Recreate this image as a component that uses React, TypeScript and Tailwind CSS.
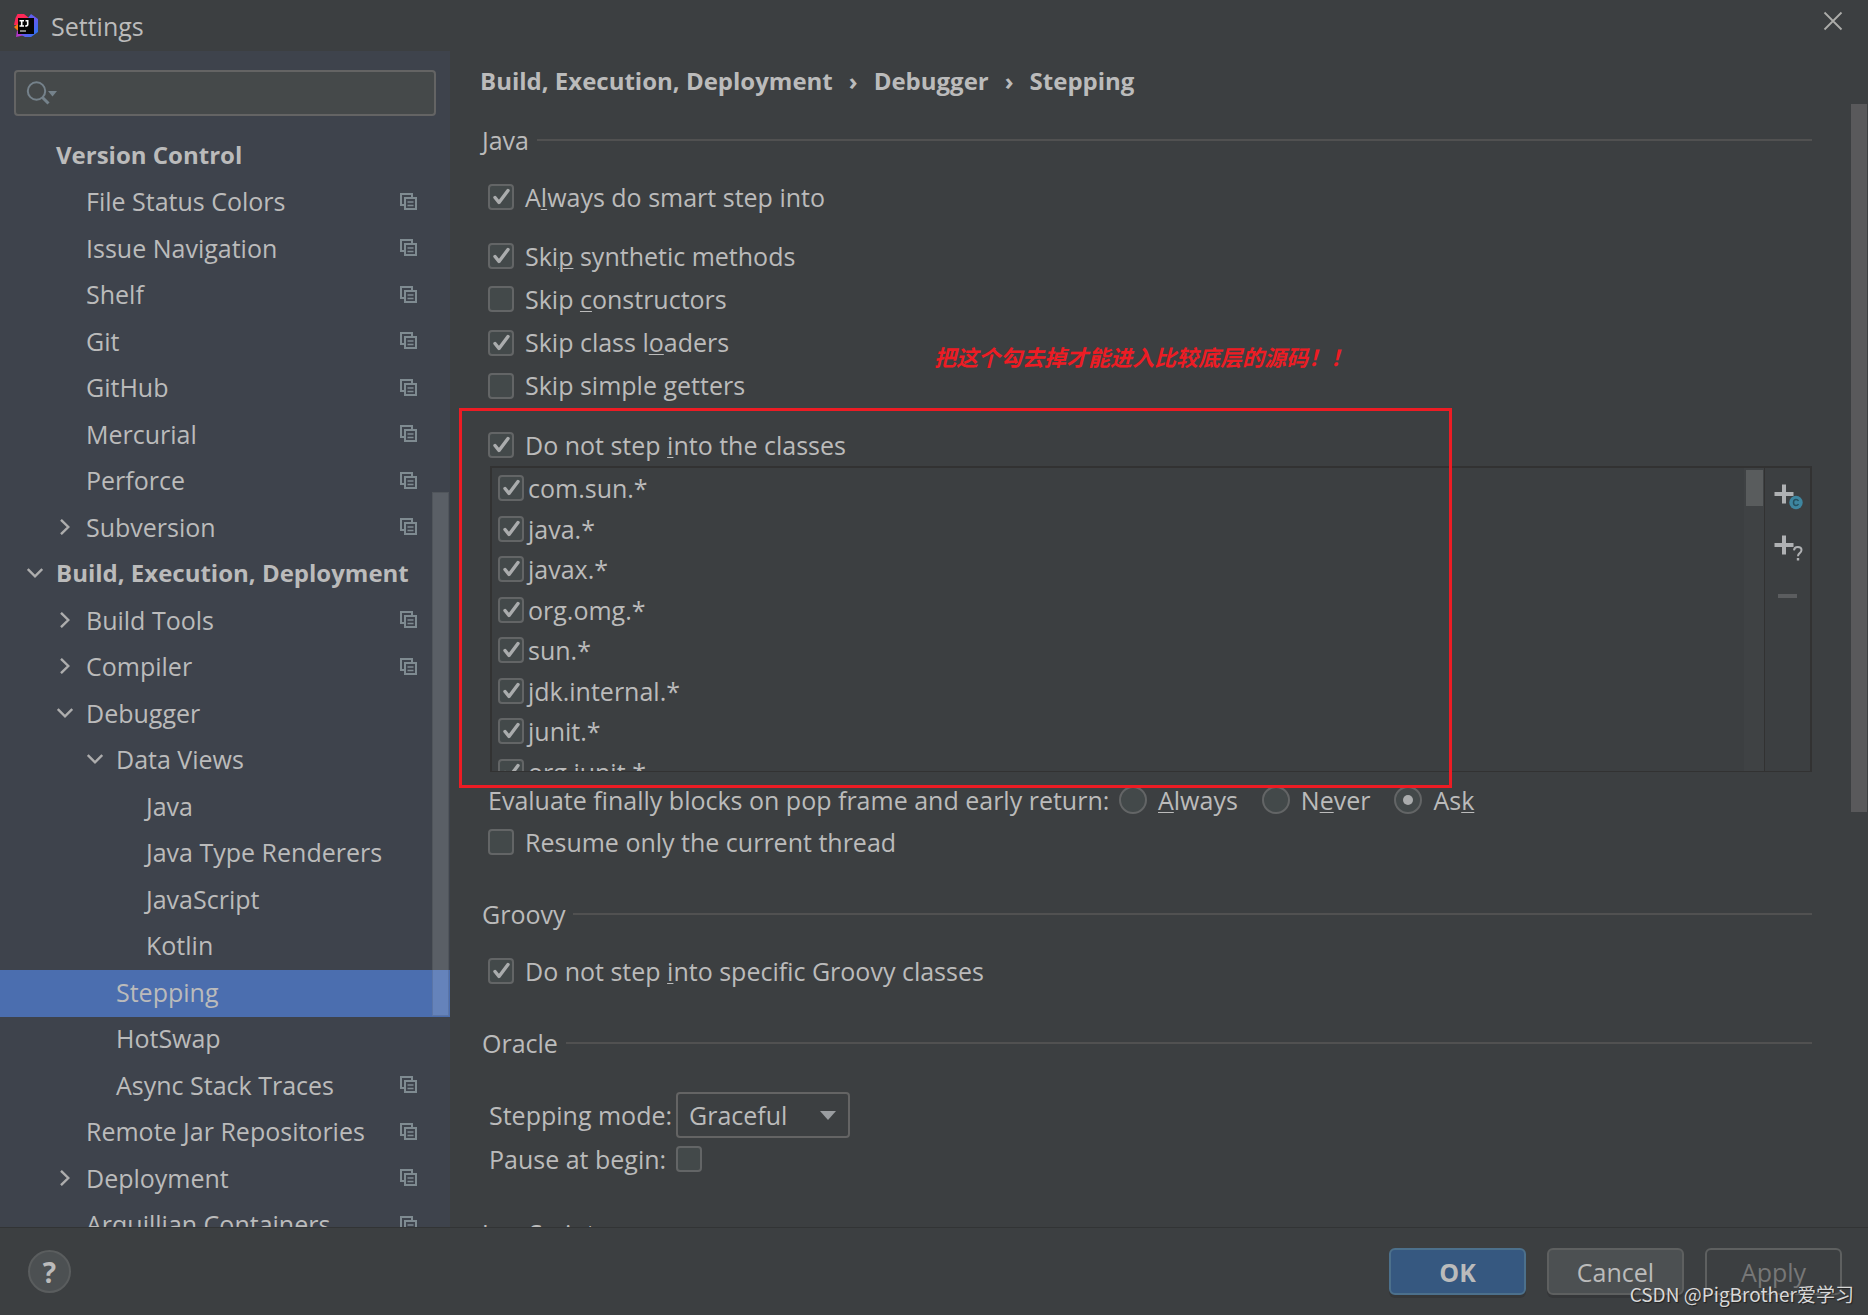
import { useState } from "react";
import type { ReactNode } from "react";

type Arrow = "open" | "closed";

type TreeItem = {
  label: string;
  level: 0 | 1 | 2 | 3;
  arrow?: Arrow;
  project?: boolean;
  selected?: boolean;
};

const TREE: TreeItem[] = [
  { label: "Version Control", level: 0 },
  { label: "File Status Colors", level: 1, project: true },
  { label: "Issue Navigation", level: 1, project: true },
  { label: "Shelf", level: 1, project: true },
  { label: "Git", level: 1, project: true },
  { label: "GitHub", level: 1, project: true },
  { label: "Mercurial", level: 1, project: true },
  { label: "Perforce", level: 1, project: true },
  { label: "Subversion", level: 1, arrow: "closed", project: true },
  { label: "Build, Execution, Deployment", level: 0, arrow: "open" },
  { label: "Build Tools", level: 1, arrow: "closed", project: true },
  { label: "Compiler", level: 1, arrow: "closed", project: true },
  { label: "Debugger", level: 1, arrow: "open" },
  { label: "Data Views", level: 2, arrow: "open" },
  { label: "Java", level: 3 },
  { label: "Java Type Renderers", level: 3 },
  { label: "JavaScript", level: 3 },
  { label: "Kotlin", level: 3 },
  { label: "Stepping", level: 2, selected: true },
  { label: "HotSwap", level: 2 },
  { label: "Async Stack Traces", level: 2, project: true },
  { label: "Remote Jar Repositories", level: 1, project: true },
  { label: "Deployment", level: 1, arrow: "closed", project: true },
  { label: "Arquillian Containers", level: 1, project: true },
];

const INDENT = ["pl-[19px]", "pl-[49px]", "pl-[79px]", "pl-[109px]"];

const CLASSES = [
  "com.sun.*",
  "java.*",
  "javax.*",
  "org.omg.*",
  "sun.*",
  "jdk.internal.*",
  "junit.*",
  "org.junit.*",
];

function AppLogo() {
  return (
    <svg width="24" height="24" viewBox="0 0 24 24" aria-hidden="true">
      <defs>
        <linearGradient id="logo-blue" x1="0" y1="0" x2="1" y2="1">
          <stop offset="0" stopColor="#3b74e8" />
          <stop offset="0.5" stopColor="#6b57f0" />
          <stop offset="1" stopColor="#1f7af0" />
        </linearGradient>
      </defs>
      <path d="M3.500 0 10 0l5 4-9 7H0L1.500 4z" fill="#fe2857" />
      <path d="M0 13l5-4v9z" fill="#f97a12" />
      <path d="M3 16.500 5 18l6 3-9 2z" fill="#b236c8" />
      <path d="M17 0l7 5v13l-7 5H11l-5-3L14 4z" fill="url(#logo-blue)" />
      <rect x="4" y="4" width="16" height="16" fill="#050505" />
      <path d="M5.500 6.700h4.500M7.700 6.500v5.500M5.500 12h4.500M11.500 6.700h3M13.700 6v4.500q0 1.500-2.500 1.500" fill="none" stroke="#fff" strokeWidth="1.600" />
      <path d="M6 17h6" stroke="#aaa" strokeWidth="1.500" />
    </svg>
  );
}

function ProjectIcon() {
  return (
    <svg width="17" height="17" viewBox="0 0 17 17" fill="none" stroke="#7f8b91" aria-hidden="true">
      <path d="M4 12H1V1h11v3" strokeWidth="2" />
      <rect x="5" y="5" width="11" height="11" strokeWidth="2" />
      <path d="M7.500 9h6M7.500 12.500h6" strokeWidth="1.500" />
    </svg>
  );
}

function TreeArrow({ state }: { state?: Arrow }) {
  return (
    <span className="flex w-[37px] shrink-0 items-center pl-2">
      {state === "open" && (
        <svg width="16" height="10" viewBox="0 0 16 10" fill="none" stroke="#adadad" strokeWidth="2.400" aria-hidden="true">
          <path d="M.8 1 8 8.300 15.200 1" />
        </svg>
      )}
      {state === "closed" && (
        <svg className="ml-[3px]" width="10" height="16" viewBox="0 0 10 16" fill="none" stroke="#adadad" strokeWidth="2.400" aria-hidden="true">
          <path d="M1 .8 8.300 8 1 15.200" />
        </svg>
      )}
    </span>
  );
}

function TreeRow({ item }: { item: TreeItem }) {
  return (
    <li className={item.selected ? "grid min-w-0 bg-[#4b6eaf]" : "grid min-w-0"}>
      <a href="#" className={`flex min-w-0 items-center pr-[33px] pb-[3px] ${INDENT[item.level]} ${item.level === 0 ? "text-[24px] font-bold" : ""}`}>
        <TreeArrow state={item.arrow} />
        <span className="flex-1 whitespace-nowrap">{item.label}</span>
        {item.project && <ProjectIcon />}
      </a>
    </li>
  );
}

function Box({ id, checked = false }: { id: string; checked?: boolean }) {
  const [on, setOn] = useState(checked);
  return (
    <span className="grid size-[26px] shrink-0">
      <input
        id={id}
        type="checkbox"
        checked={on}
        onChange={() => setOn(!on)}
        className="col-start-1 row-start-1 size-[26px] appearance-none rounded border-2 border-[#636566] bg-[#43494a]"
      />
      {on && (
        <svg
          className="pointer-events-none col-start-1 row-start-1"
          width="26"
          height="26"
          viewBox="0 0 26 26"
          fill="none"
          stroke="#aaacad"
          strokeWidth="3.400"
          strokeLinecap="round"
          strokeLinejoin="round"
          aria-hidden="true"
        >
          <path d="M7 13.500 11 18.500 20 6.500" />
        </svg>
      )}
    </span>
  );
}

function Check({ id, checked, children }: { id: string; checked?: boolean; children: ReactNode }) {
  return (
    <div className="flex h-[34px] items-center gap-[11px] pl-2">
      <Box id={id} checked={checked} />
      <label htmlFor={id} className="pb-px">{children}</label>
    </div>
  );
}

function Key({ children }: { children: ReactNode }) {
  return <span className="underline decoration-1 underline-offset-2">{children}</span>;
}

function Section({ title }: { title: string }) {
  return (
    <div className="flex h-[34px] items-center gap-2 pl-0.5">
      <h2>{title}</h2>
      <div className="h-0.5 flex-1 bg-[#515151]" />
    </div>
  );
}

function Radio({ id, checked, onPick, children }: { id: string; checked: boolean; onPick: () => void; children: ReactNode }) {
  return (
    <div className="flex items-center gap-[11px]">
      <span className="grid size-7 place-items-center">
        <input
          id={id}
          type="radio"
          name="finally-blocks"
          checked={checked}
          onChange={onPick}
          className="col-start-1 row-start-1 size-7 appearance-none rounded-full border-2 border-[#636566] bg-[#43494a]"
        />
        {checked && <span className="pointer-events-none col-start-1 row-start-1 size-2.5 rounded-full bg-[#aaacad]" />}
      </span>
      <label htmlFor={id}>{children}</label>
    </div>
  );
}

function ClassList() {
  return (
    <div className="mt-1 ml-2.5 flex h-[306px] overflow-hidden border-2 border-b border-[#323232]">
      <ul className="grid h-[324px] flex-1 auto-rows-fr pl-1.5">
        {CLASSES.map((name) => (
          <li key={name} className="flex items-center gap-1">
            <Box id={name} checked />
            <label htmlFor={name}>{name}</label>
          </li>
        ))}
      </ul>
      <div className="w-5 bg-[#3f4244] pt-0.5 pl-0.5">
        <div className="h-9 w-[17px] bg-[#595c5d]" />
      </div>
      <div className="flex w-[46px] flex-col items-center gap-[19px] border-l border-[#323232] pt-3">
        <button type="button" aria-label="Add class">
          <svg width="32" height="32" viewBox="0 0 32 32" aria-hidden="true">
            <path d="M2.500 14h19M12 4.500v19" stroke="#afb1b3" strokeWidth="4" />
            <circle cx="24" cy="22.500" r="6.700" fill="#3e86a0" />
            <path d="M26.500 21q-.8-1.500-2.500-1.500-2.500 0-2.500 3t2.500 3q1.700 0 2.500-1.500" fill="none" stroke="#25505f" strokeWidth="1.500" />
          </svg>
        </button>
        <button type="button" aria-label="Add pattern">
          <svg width="32" height="32" viewBox="0 0 32 32" aria-hidden="true">
            <path d="M2.500 14h19M12 4.500v19" stroke="#afb1b3" strokeWidth="4" />
            <path d="M22 19.300q.3-3.300 3.800-3.300 3.700 0 3.700 3.100 0 1.700-1.800 3-1.700 1.200-1.700 3.200" fill="none" stroke="#afb1b3" strokeWidth="2" />
            <path d="M26 27v2.500" stroke="#afb1b3" strokeWidth="2.400" />
          </svg>
        </button>
        <button type="button" aria-label="Remove" disabled>
          <svg width="32" height="32" viewBox="0 0 32 32" aria-hidden="true">
            <path d="M6 14h19" stroke="#5b5d5f" strokeWidth="4" />
          </svg>
        </button>
      </div>
    </div>
  );
}

export default function App() {
  const [mode, setMode] = useState("ask");
  return (
    <div className="relative flex h-screen flex-col overflow-hidden bg-[#3c3f41] font-['Open_Sans','Noto_Sans_CJK_SC',sans-serif] text-[25px] leading-[34px] text-[#bbbbbb]">
      <header className="flex h-[51px] shrink-0 items-center gap-[13px] pr-[25px] pl-3.5">
        <AppLogo />
        <h1 className="flex-1">Settings</h1>
        <button type="button" aria-label="Close" className="pb-2.5">
          <svg width="20" height="20" viewBox="0 0 20 20" stroke="#adadaa" strokeWidth="1.800" aria-hidden="true">
            <path d="M1.500 1.500l17 17M18.500 1.500l-17 17" />
          </svg>
        </button>
      </header>

      <div className="flex min-h-0 flex-1">
        <aside className="relative flex w-[450px] shrink-0 flex-col overflow-hidden bg-[#3e434c] pt-[19px]">
          <label className="mr-3.5 ml-3.5 flex h-[46px] shrink-0 items-center rounded border-2 border-[#646464] bg-[#45494a] pl-2.5">
            <svg width="32" height="24" viewBox="0 0 32 24" fill="none" aria-hidden="true">
              <circle cx="10.500" cy="10" r="8.700" stroke="#75828b" strokeWidth="2" />
              <path d="M16.500 16.500l6 6" stroke="#75828b" strokeWidth="3" />
              <path d="M22 10h9l-4.500 5.500z" fill="#75828b" />
            </svg>
            <input type="search" aria-label="Search settings" className="min-w-0 flex-1 bg-transparent outline-none" />
          </label>
          <nav aria-label="Settings categories" className="mt-[17px] min-h-0 flex-1">
            <ul className="grid h-[1116px] auto-rows-fr grid-cols-1">
              {TREE.map((item) => (
                <TreeRow key={item.label + item.level} item={item} />
              ))}
            </ul>
          </nav>
          <div className="absolute top-[441px] right-px h-[524px] w-[17px] border border-black/10 bg-white/15" />
        </aside>

        <main className="relative flex min-w-0 flex-1">
          <div className="flex min-w-0 flex-1 flex-col overflow-hidden pr-[39px] pl-[30px]">
            <nav aria-label="Breadcrumb" className="flex h-[60px] shrink-0 items-center gap-4 text-[24px] font-bold whitespace-nowrap">
              <a href="#">Build, Execution, Deployment</a>
              <span>›</span>
              <a href="#">Debugger</a>
              <span>›</span>
              <a href="#">Stepping</a>
            </nav>

            <div className="mt-3 shrink-0">
              <Section title="Java" />
              <div className="mt-[23px]">
                <Check id="smart-step" checked>
                  A<Key>l</Key>ways do smart step into
                </Check>
              </div>
              <div className="mt-[25px] flex h-[164px] flex-col justify-between">
                <Check id="skip-synthetic" checked>
                  Ski<Key>p</Key> synthetic methods
                </Check>
                <Check id="skip-constructors">
                  Skip <Key>c</Key>onstructors
                </Check>
                <Check id="skip-loaders" checked>
                  Skip class l<Key>o</Key>aders
                </Check>
                <Check id="skip-getters">
                  Skip simple <Key>g</Key>etters
                </Check>
              </div>
              <div className="mt-[25px]">
                <Check id="skip-classes" checked>
                  Do not step <Key>i</Key>nto the classes
                </Check>
              </div>
              <ClassList />
              <fieldset className="mt-[11px] flex h-[34px] items-center gap-6 pl-2">
                <legend className="float-left w-[607px] whitespace-nowrap">Evaluate finally blocks on pop frame and early return:</legend>
                <Radio id="r-always" checked={mode === "always"} onPick={() => setMode("always")}>
                  <Key>A</Key>lways
                </Radio>
                <Radio id="r-never" checked={mode === "never"} onPick={() => setMode("never")}>
                  N<Key>e</Key>ver
                </Radio>
                <Radio id="r-ask" checked={mode === "ask"} onPick={() => setMode("ask")}>
                  As<Key>k</Key>
                </Radio>
              </fieldset>
              <div className="mt-2">
                <Check id="resume-thread">Resume only the current thread</Check>
              </div>
            </div>

            <div className="mt-[38px] shrink-0">
              <Section title="Groovy" />
              <div className="mt-[23px]">
                <Check id="groovy-classes" checked>
                  Do not step <Key>i</Key>nto specific Groovy classes
                </Check>
              </div>
            </div>

            <div className="mt-[38px] shrink-0">
              <Section title="Oracle" />
              <div className="mt-8 grid grid-cols-[187px_1fr] items-center gap-y-1 pl-[9px]">
                <label htmlFor="stepping-mode" className="whitespace-nowrap">Stepping mode:</label>
                <div className="relative w-[174px]">
                  <select
                    id="stepping-mode"
                    className="block h-[46px] w-full appearance-none rounded border-2 border-[#646464] bg-[#3c3f41] pl-[11px]"
                  >
                    <option>Graceful</option>
                  </select>
                  <svg className="pointer-events-none absolute top-[19px] right-[14px]" width="16" height="9" viewBox="0 0 16 9" aria-hidden="true">
                    <path d="M0 0h16L8 9z" fill="#9a9da0" />
                  </svg>
                </div>
                <label htmlFor="pause-begin">Pause at begin:</label>
                <Box id="pause-begin" />
              </div>
            </div>

            <div className="mt-10 shrink-0">
              <Section title="JavaScript" />
            </div>
          </div>
          <div className="w-[17px] shrink-0 pt-[53px]">
            <div className="h-[708px] w-4 bg-[#59595b]" />
          </div>

          <div className="pointer-events-none absolute top-[357px] left-[9px] h-[380px] w-[993px] border-3 border-[#ed1c24]" />
          <p className="absolute top-[288px] left-[484px] font-['Noto_Sans_CJK_SC',sans-serif] text-[22px] font-bold whitespace-nowrap text-[#ed1c24] italic">
            把这个勾去掉才能进入比较底层的源码！！
          </p>
        </main>
      </div>

      <footer className="flex h-[88px] shrink-0 items-center gap-[21px] border-t border-[#323435] pr-[26px] pl-7">
        <button
          type="button"
          aria-label="Help"
          className="mr-auto size-[43px] rounded-full border-2 border-[#5a5d5e] bg-[#4c5052] text-[28px] font-bold"
        >
          ?
        </button>
        <button type="button" className="h-[47px] w-[137px] rounded-md border-2 border-[#4c708c] bg-[#365880] font-bold shadow-[0_3px_0_#353739]">
          OK
        </button>
        <button type="button" className="h-[47px] w-[137px] rounded-md border-2 border-[#5e6060] bg-[#4c5052] shadow-[0_3px_0_#353739]">
          Cancel
        </button>
        <button type="button" disabled className="h-[47px] w-[137px] rounded-md border-2 border-[#5e6060] text-[#777777]">
          Apply
        </button>
      </footer>

      <p className="absolute right-[14px] bottom-1 font-['Noto_Sans_CJK_SC',sans-serif] text-[19px] whitespace-nowrap text-[#d8d8d8] [text-shadow:1px_1px_1px_#222]">
        CSDN @PigBrother爱学习
      </p>
    </div>
  );
}
